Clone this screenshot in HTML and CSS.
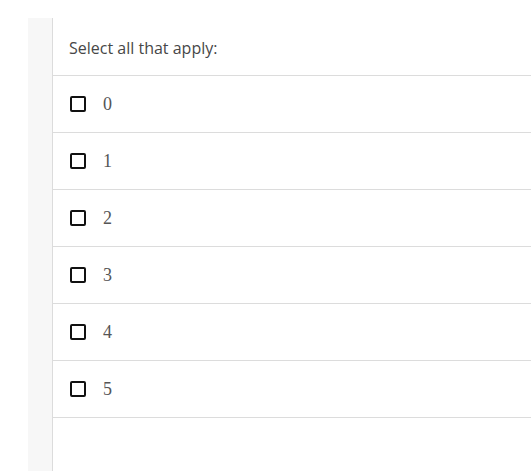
FILE: index.html
```html
<!DOCTYPE html>
<html>
<head>
<meta charset="utf-8">
<link rel="stylesheet" href="styles.css">
</head>
<body>
<div class="question">
  <div class="strip"></div>
  <div class="body">
    <div class="prompt">Select all that apply:</div>
    <ul class="options">
      <li class="option"><span class="box"></span><span class="num">0</span></li>
      <li class="option"><span class="box"></span><span class="num">1</span></li>
      <li class="option"><span class="box"></span><span class="num">2</span></li>
      <li class="option"><span class="box"></span><span class="num">3</span></li>
      <li class="option"><span class="box"></span><span class="num">4</span></li>
      <li class="option"><span class="box"></span><span class="num">5</span></li>
    </ul>
  </div>
</div>
</body>
</html>
```
FILE: styles.css
```css
html, body {
  margin: 0;
  padding: 0;
  background: #fff;
}
.question {
  display: flex;
  margin: 18px 0 0 28px;
  min-height: 453px;
}
.strip {
  width: 24px;
  background: #f7f7f7;
  border-right: 1px solid #dcdcdc;
  flex: none;
}
.body {
  flex: 1;
}
.prompt {
  height: 58px;
  box-sizing: border-box;
  border-bottom: 1px solid #dcdcdc;
  display: flex;
  align-items: center;
  padding-left: 16px;
  padding-top: 2px;
  font-family: "Open Sans", sans-serif;
  font-size: 16px;
  color: #474747;
}
.options {
  list-style: none;
  margin: 0;
  padding: 0;
}
.option {
  height: 57px;
  box-sizing: border-box;
  border-bottom: 1px solid #dcdcdc;
  display: flex;
  align-items: center;
  padding-left: 17px;
}
.box {
  width: 16px;
  height: 16px;
  box-sizing: border-box;
  border: 2px solid #111;
  border-radius: 2px;
  flex: none;
}
.num {
  margin-left: 17px;
  font-family: "Liberation Serif", serif;
  font-size: 18px;
  color: #555;
}
```
